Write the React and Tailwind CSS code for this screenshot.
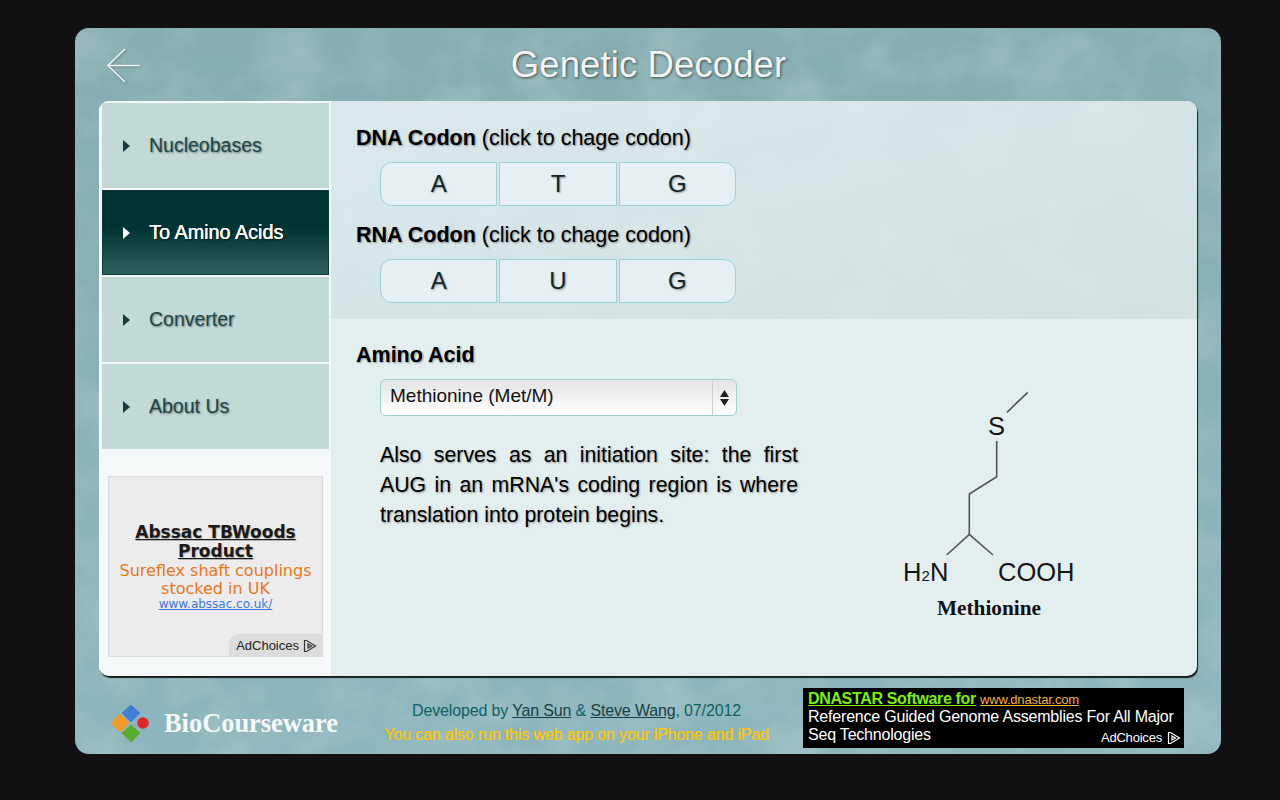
const navItems = [
  { label: "Nucleobases" },
  { label: "To Amino Acids", active: true },
  { label: "Converter" },
  { label: "About Us" },
];

const Marble = ({ seed, opacity }) => (
  <svg className="absolute inset-0 h-full w-full pointer-events-none" style={{ opacity }}>
    <filter id={`marble-${seed}`}>
      <feTurbulence type="fractalNoise" baseFrequency="0.016 0.018" numOctaves="6" seed={seed} />
      <feColorMatrix values="0 0 0 0 1  0 0 0 0 1  0 0 0 0 1  1.8 0 0 0 -0.68" />
    </filter>
    <rect width="100%" height="100%" filter={`url(#marble-${seed})`} />
  </svg>
);

const AdChoicesIcon = ({ dark }) => (
  <svg width="14" height="14" viewBox="0 0 14 14" fill="none" stroke={dark ? "#333" : "#fff"} strokeWidth="1.2">
    <path d="M1.5 1V13" />
    <path d="M1.5 1.5H3.5L12.5 7L3.5 12.5H1.5" />
    <path d="M5 5L8.5 7L5 9Z" />
  </svg>
);

const NavRow = ({ label, active }) => (
  <div
    className={`flex items-center h-[85px] mb-[2px] ${
      active
        ? "pl-[20px] bg-gradient-to-b from-[#003333] from-45% to-[#2e6260] text-white text-[19.8px] border border-[#0b3c3c] [text-shadow:0.4px_0_0_#fff,1px_1px_2px_rgba(0,0,0,0.8)]"
        : "pl-[21px] bg-[#c2dad6] text-[#1c4549] text-[19.5px] [text-shadow:1px_1px_2px_rgba(0,0,0,0.45)]"
    }`}
  >
    <svg width="7" height="12" viewBox="0 0 7 12" className="mr-[19px] shrink-0">
      <path d="M0 0L7 6L0 12Z" fill={active ? "#fff" : "#143c3f"} />
    </svg>
    <span>{label}</span>
  </div>
);

const CodonButtons = ({ letters }) => (
  <div className="flex gap-[2px] ml-[24px] mt-[12px] w-[356px] h-[44px]">
    {letters.map((l, i) => (
      <div
        key={i}
        className={`flex-1 flex items-center justify-center bg-[#e6f0f2] border border-[#9fd0d0] text-[24px] text-[#10262a] [text-shadow:1px_1px_2px_rgba(0,0,0,0.4)] ${
          i === 0 ? "rounded-l-[12px]" : i === 2 ? "rounded-r-[12px]" : ""
        }`}
      >
        {l}
      </div>
    ))}
  </div>
);

const CodonHeading = ({ name }) => (
  <div className="text-[21.5px] leading-[24px] text-black [text-shadow:1px_1px_2px_rgba(0,0,0,0.4)]">
    <span className="font-bold">{name}</span> (click to chage codon)
  </div>
);

const Molecule = () => (
  <svg width="200" height="240" viewBox="880 385 200 240" className="shrink-0 mt-[66px] ml-[83px]">
    <g stroke="#555" strokeWidth="1.6" fill="none">
      <path d="M1026.7 392.3L1006 412.3" />
      <path d="M995.7 441V476.7L968.3 494V534.3L945.7 555" />
      <path d="M968.3 534.3L992 555" />
    </g>
    <g fontFamily="'Liberation Sans', Arial, sans-serif" fontSize="25.5" fill="#151515">
      <text x="987" y="435">S</text>
      <text x="902" y="581">H</text>
      <text x="920.5" y="581" fontSize="15">2</text>
      <text x="929" y="581">N</text>
      <text x="997" y="581">COOH</text>
    </g>
    <text
      x="988"
      y="615"
      textAnchor="middle"
      fontFamily="'Liberation Serif', 'Times New Roman', serif"
      fontWeight="bold"
      fontSize="21.3"
      fill="#111"
    >
      Methionine
    </text>
  </svg>
);

const App = () => {
  return (
    <div className="h-[800px] overflow-hidden bg-[#111111] pt-[28px] pl-[75px] font-['Liberation_Sans',Arial,sans-serif]">
      <div className="relative w-[1146px] h-[726px] rounded-[14px] overflow-hidden bg-gradient-to-b from-[#86aeb2] to-[#8db6bc]">
        <Marble seed={4} opacity={0.2} />

        {/* header */}
        <div className="relative flex items-center h-[73px] pl-[31px]">
          <svg width="35" height="36" viewBox="0 0 35 36" fill="none" stroke="#f4f7f7" strokeWidth="1.4" className="shrink-0 drop-shadow-[1px_1px_1px_rgba(0,0,0,0.3)]">
            <path d="M19 2L2 18.5L19 35" />
            <path d="M2 18.5H34" />
          </svg>
          <div className="flex-1 text-center pl-[80px] pr-[145px] pt-[2px] text-[36.5px] tracking-[0.1px] text-[#f2f5f5] [text-shadow:1px_1px_3px_rgba(0,0,0,0.6)]">
            Genetic Decoder
          </div>
        </div>

        {/* main panel */}
        <div className="relative flex ml-[24px] w-[1098px] h-[575px] rounded-[10px] overflow-hidden bg-[#e3eeef] shadow-[1px_2px_1px_rgba(0,0,0,0.85)]">
          <div className="w-[232px] shrink-0 pt-[2px] pl-[2px] pr-[2px] bg-[#f4f8f9] border-l border-white">
            {navItems.map((n) => (
              <NavRow key={n.label} label={n.label} active={n.active} />
            ))}
            <div className="relative ml-[6px] mt-[27px] w-[215px] h-[181px] bg-[#ececec] border border-[#dcdcdc] flex flex-col items-center pt-[46px] font-['DejaVu_Sans',Verdana,sans-serif] text-center">
              <div className="text-[17px] leading-[19px] font-bold text-[#1a1a1a] underline [text-shadow:1px_1px_1px_rgba(0,0,0,0.25)]">
                Abssac TBWoods
                <br />
                Product
              </div>
              <div className="text-[16px] leading-[18px] text-[#e8761c] mt-[1px]">
                Sureflex shaft couplings
                <br />
                stocked in UK
              </div>
              <div className="text-[12px] leading-[14px] text-[#3c78e6] underline mt-[-1px]">www.abssac.co.uk/</div>
              <div className="absolute right-0 bottom-0 flex items-center gap-[4px] h-[22px] pl-[7px] pr-[5px] pt-[2px] bg-[#dddddd] rounded-tl-[10px] text-[13px] text-[#222] font-['Liberation_Sans',Arial,sans-serif]">
                AdChoices
                <AdChoicesIcon dark />
              </div>
            </div>
          </div>

          <div className="flex-1 min-w-0 flex flex-col">
            <div className="relative h-[218px] pt-[25px] pl-[25px] bg-gradient-to-br from-[#d9e8ec] to-[#d0e2e0] overflow-hidden">
              <Marble seed={9} opacity={0.12} />
              <div className="relative">
                <CodonHeading name="DNA Codon" />
                <CodonButtons letters={["A", "T", "G"]} />
                <div className="mt-[17px]">
                  <CodonHeading name="RNA Codon" />
                </div>
                <CodonButtons letters={["A", "U", "G"]} />
              </div>
            </div>

            <div className="flex flex-1 pl-[25px]">
              <div className="w-[442px] shrink-0 pt-[24px]">
                <div className="text-[21.5px] leading-[24px] font-bold text-black [text-shadow:1px_1px_2px_rgba(0,0,0,0.4)]">
                  Amino Acid
                </div>
                <div className="flex ml-[24px] mt-[12px] w-[357px] h-[37px] rounded-[6px] border border-[#9fd0d0] bg-gradient-to-b from-[#e4e4e4] to-[#ffffff] overflow-hidden">
                  <div className="flex-1 pl-[9px] text-[19px] leading-[32px] text-[#111]">Methionine (Met/M)</div>
                  <div className="flex flex-col items-center justify-center gap-[2px] w-[24px] border-l border-[#cfcfcf]">
                    <svg width="9" height="7" viewBox="0 0 9 7"><path d="M4.5 0L9 7H0Z" fill="#222" /></svg>
                    <svg width="9" height="7" viewBox="0 0 9 7"><path d="M4.5 7L9 0H0Z" fill="#222" /></svg>
                  </div>
                </div>
                <p className="ml-[24px] mt-[24px] w-[418px] text-[21.3px] leading-[30px] text-justify text-black [text-shadow:1px_1px_2px_rgba(0,0,0,0.35)]">
                  Also serves as an initiation site: the first AUG in an mRNA's coding region is where translation into protein begins.
                </p>
              </div>
              <Molecule />
            </div>
          </div>
        </div>

        {/* footer */}
        <div className="relative flex items-center h-[78px] pl-[36px] pt-[16px]">
          <svg width="40" height="40" viewBox="0 0 40 40" className="shrink-0">
            <path d="M20 3L28 10L20 18L12 10Z" fill="#3f7fd6" stroke="#3f7fd6" strokeWidth="2" strokeLinejoin="round" />
            <path d="M9 12L17 20L9 28L1 20Z" fill="#f09a2c" stroke="#f09a2c" strokeWidth="2" strokeLinejoin="round" />
            <path d="M20 23L28 30L20 38L12 30Z" fill="#58ad2e" stroke="#58ad2e" strokeWidth="2" strokeLinejoin="round" />
            <circle cx="32" cy="20" r="5.8" fill="#e0262c" />
          </svg>
          <div className="ml-[13px] w-[186px] pt-[1px] text-[26.4px] font-bold text-[#f6f9f9] font-['Liberation_Serif','Times_New_Roman',serif]">
            BioCourseware
          </div>
          <div className="w-[453px] text-center text-[16px] leading-[24px] tracking-[-0.15px]">
            <div className="text-[#0f5f63]">
              Developed by <span className="underline text-[#173f43]">Yan Sun</span> &amp;{" "}
              <span className="underline text-[#173f43]">Steve Wang</span>, 07/2012
            </div>
            <div className="text-[#f5c518] [text-shadow:0.3px_0_0_#f5c518]">You can also run this web app on your iPhone and iPad</div>
          </div>
          <div className="relative mt-[-10px] w-[381px] h-[60px] bg-black text-white pl-[5px] pt-[2px] text-[16px] leading-[18px] tracking-[-0.2px]">
            <div>
              <span className="font-bold underline text-[#7cf000] tracking-[-0.35px]">DNASTAR Software for</span>{" "}
              <span className="text-[13px] underline text-[#f0b040]">www.dnastar.com</span>
            </div>
            <div className="mt-[-1px]">Reference Guided Genome Assemblies For All Major</div>
            <div>Seq Technologies</div>
            <div className="absolute right-[3px] bottom-[3px] flex items-center gap-[5px] text-[13px] leading-[14px]">
              AdChoices
              <AdChoicesIcon />
            </div>
          </div>
        </div>
      </div>
    </div>
  );
};

export default App;
